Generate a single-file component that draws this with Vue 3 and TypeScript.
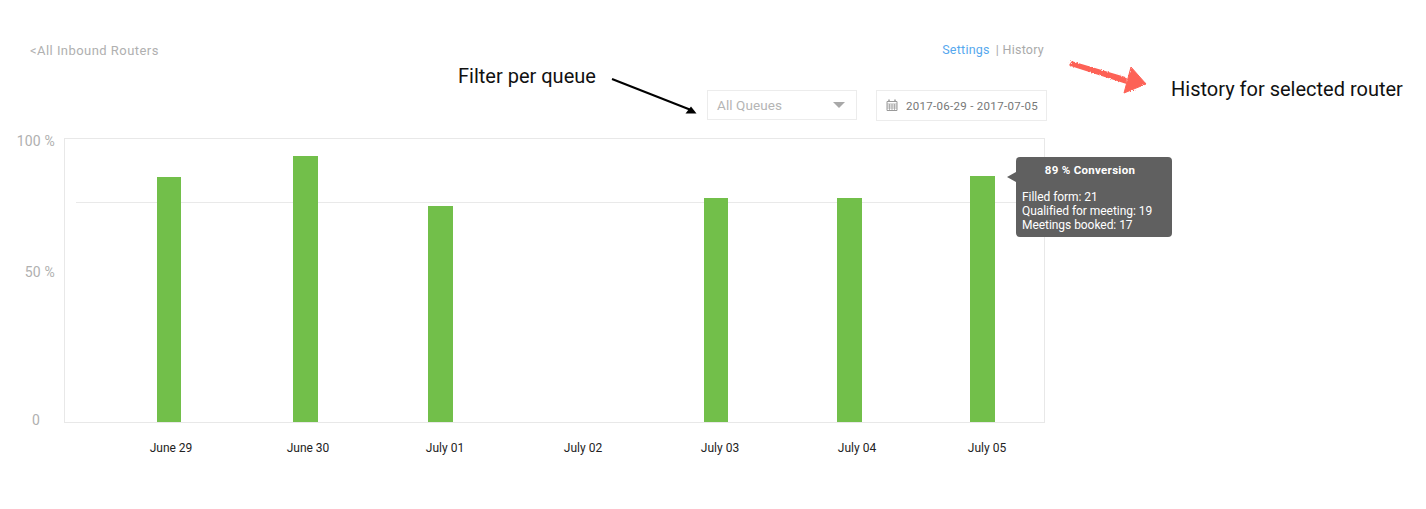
<script setup lang="ts">
interface Bar { label: string; labelX: number; left: number; width: number; top: number }
const bars: Bar[] = [
  { label: 'June 29', labelX: 171, left: 157, width: 24, top: 177 },
  { label: 'June 30', labelX: 308, left: 293, width: 25, top: 156 },
  { label: 'July 01', labelX: 445, left: 428, width: 25, top: 206 },
  { label: 'July 02', labelX: 583, left: 0, width: 0, top: 0 },
  { label: 'July 03', labelX: 720, left: 704, width: 24, top: 198 },
  { label: 'July 04', labelX: 857, left: 837, width: 25, top: 198 },
  { label: 'July 05', labelX: 987, left: 970, width: 25, top: 176 },
]
const chartLeft = 64
const chartBottom = 422
const visible = bars.filter((b) => b.width > 0)
function barStyle(b: Bar) {
  return {
    left: `${b.left - chartLeft - 1}px`,
    width: `${b.width}px`,
    height: `${chartBottom - b.top}px`,
  }
}
function labelStyle(b: Bar) {
  return { left: `${b.labelX}px` }
}
</script>

<template>
  <div class="page">
    <header class="top">
      <a class="back">&lt;All Inbound Routers</a>
      <nav class="tabs">
        <a class="active">Settings</a>
        <span class="sep">| History</span>
      </nav>
    </header>

    <div class="filters">
      <div class="select">
        <span>All Queues</span>
        <i class="caret"></i>
      </div>
      <div class="dates">
        <svg class="cal" viewBox="0 0 12 12" width="12" height="12">
          <path d="M1 2.500h10v9H1z" fill="none" stroke="#9a9a9a" stroke-width="1" />
          <path d="M1 5h10M1 7h10M1 9h10M3.500 5v6M6 5v6M8.500 5v6" stroke="#9a9a9a" stroke-width=".7" fill="none" />
          <path d="M3 .5v2.500M9 .5v2.500" stroke="#9a9a9a" stroke-width="1.500" />
        </svg>
        <span>2017-06-29 - 2017-07-05</span>
      </div>
    </div>

    <section class="chart-row">
      <div class="y-axis">
        <span>100 %</span>
        <span>50 %</span>
        <span>0</span>
      </div>
      <div class="plot">
        <div class="grid"></div>
        <div v-for="b in visible" :key="b.label" class="bar" :style="barStyle(b)"></div>
        <div class="tip">
          <strong>89 % Conversion</strong>
          <p>Filled form: 21<br />Qualified for meeting: 19<br />Meetings booked: 17</p>
        </div>
      </div>
    </section>

    <div class="x-axis">
      <span v-for="b in bars" :key="b.label" :style="labelStyle(b)">{{ b.label }}</span>
    </div>

    <div class="note note-filter">Filter per queue</div>
    <svg class="arrow-black" width="100" height="50" viewBox="0 0 100 50">
      <path d="M1 4L80 35" stroke="#000" stroke-width="2" fill="none" />
      <path d="M85.500 38.500L74.500 38.500L80 31.500z" fill="#000" />
    </svg>

    <svg class="arrow-red" width="100" height="50" viewBox="0 0 100 50">
      <defs>
        <filter id="rough" x="-10%" y="-20%" width="120%" height="140%">
          <feTurbulence type="fractalNoise" baseFrequency="0.7" numOctaves="2" seed="4" />
          <feDisplacementMap in="SourceGraphic" scale="3" />
        </filter>
      </defs>
      <g filter="url(#rough)">
        <path d="M12 12L66 28L66 33L10 15z" fill="#fd6257" stroke="#fd6257" stroke-width="1.500" stroke-linejoin="round" />
        <path d="M71 17L86 34L64 43z" fill="#fd6257" stroke="#fd6257" stroke-width="1" stroke-linejoin="round" />
      </g>
    </svg>
    <div class="note note-history">History for selected router</div>
  </div>
</template>

<style>
body { margin: 0; background: #fff; }
</style>

<style scoped>
.page {
  position: relative;
  width: 1426px;
  height: 509px;
  overflow: hidden;
  background: #fff;
  font-family: Roboto, "Liberation Sans", sans-serif;
  box-sizing: border-box;
}
.top {
  display: flex;
  justify-content: space-between;
  width: 1014px;
  margin-left: 30px;
  padding-top: 43px;
  font-size: 13px;
  line-height: 16px;
  color: #b0b0b0;
  letter-spacing: .45px;
}
.tabs {
  display: flex;
  gap: 6px;
  height: 15px;
  margin-top: -1px;
  font-size: 12.500px;
  letter-spacing: .25px;
}
.active { color: #55a8ee; }
.sep { color: #aaa; }
.filters {
  display: flex;
  justify-content: flex-end;
  align-items: flex-start;
  gap: 19px;
  width: 1047px;
  margin-top: 31px;
}
.select, .dates {
  box-sizing: border-box;
  display: flex;
  align-items: center;
  border: 1px solid #ececec;
  background: #fff;
}
.select {
  width: 150px;
  height: 30px;
  padding: 0 11px 0 9px;
  justify-content: space-between;
  font-size: 13.500px;
  color: #b5b5b5;
  letter-spacing: .1px;
}
.caret {
  width: 0;
  height: 0;
  border-left: 6px solid transparent;
  border-right: 6px solid transparent;
  border-top: 6px solid #a8a8a8;
}
.dates {
  width: 171px;
  height: 31px;
  padding-left: 9px;
  gap: 8px;
  font-size: 11.500px;
  color: #777;
  letter-spacing: .3px;
}
.cal { flex: none; margin-top: -2px; }
.chart-row {
  display: flex;
  margin-top: 17px;
  align-items: stretch;
}
.y-axis {
  position: relative;
  width: 64px;
  height: 285px;
  display: flex;
  flex-direction: column;
  align-items: flex-end;
  box-sizing: border-box;
  padding: 0 9px 0 0;
  font-size: 14px;
  line-height: 16px;
  color: #b0b0b0;
  letter-spacing: .2px;
}
.y-axis span:nth-child(1) { margin-top: -5px; }
.y-axis span:nth-child(2) { margin-top: 115px; }
.y-axis span:nth-child(3) { margin-top: 132px; margin-right: 15px; }
.plot {
  position: relative;
  box-sizing: border-box;
  width: 981px;
  height: 285px;
  border: 1px solid #e8e8e8;
}
.grid {
  position: absolute;
  left: 11px;
  right: 0;
  top: 63px;
  height: 1px;
  background: #e9e9e9;
}
.bar {
  position: absolute;
  bottom: 0;
  background: #72bf4a;
}
.tip {
  position: absolute;
  left: 951px;
  top: 18px;
  box-sizing: border-box;
  width: 156px;
  height: 80px;
  padding: 6px 6px;
  border-radius: 4px;
  background: #606060;
  color: #fff;
  font-size: 12px;
  line-height: 14px;
  letter-spacing: -.05px;
}
.tip::before {
  content: "";
  position: absolute;
  left: -9px;
  top: 15px;
  border-top: 5px solid transparent;
  border-bottom: 5px solid transparent;
  border-right: 9px solid #606060;
}
.tip strong {
  display: block;
  text-align: center;
  font-size: 11.500px;
  font-weight: 700;
  letter-spacing: .3px;
  padding-right: 8px;
}
.tip p { margin: 13px 0 0; }
.x-axis {
  position: relative;
  height: 16px;
  margin-top: 17px;
}
.x-axis span {
  position: absolute;
  top: 0;
  transform: translateX(-50%);
  font-size: 12px;
  line-height: 16px;
  color: #222;
  white-space: nowrap;
}
.note {
  position: absolute;
  font-size: 20px;
  line-height: 22px;
  color: #111;
  white-space: nowrap;
}
.note-filter { left: 458px; top: 65px; }
.note-history { left: 1171px; top: 78px; }
.arrow-black { position: absolute; left: 611px; top: 75px; }
.arrow-red { position: absolute; left: 1060px; top: 50px; }
</style>
